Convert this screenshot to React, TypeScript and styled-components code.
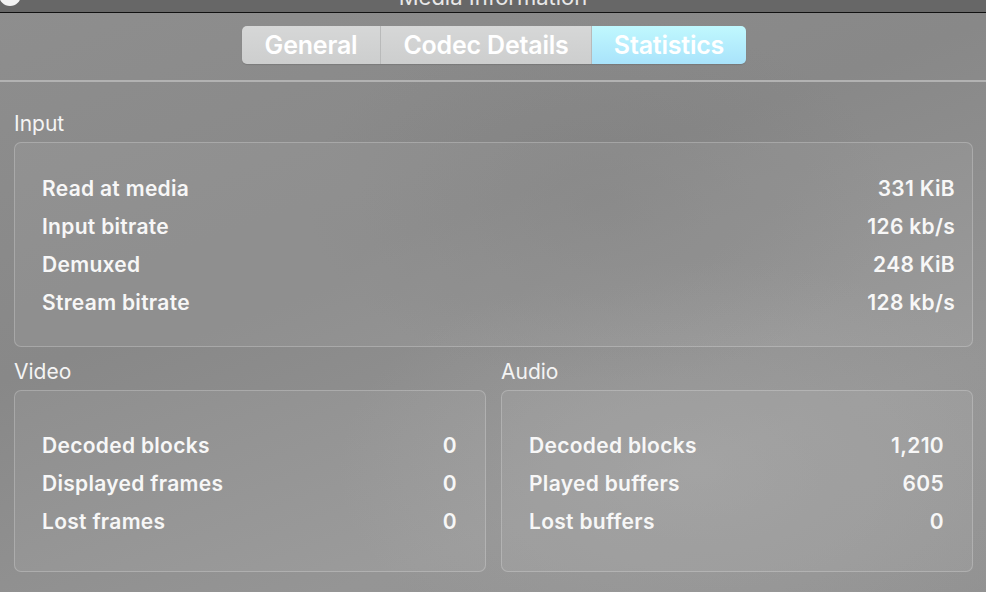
import React from "react"
import styled, { createGlobalStyle } from "styled-components"

const GlobalStyle = createGlobalStyle`
    html, body {
        margin: 0;
        padding: 0;
        background: #8a8a8a;
    }
    body {
        font-family: Inter, "Noto Sans", "Liberation Sans", sans-serif;
        -webkit-font-smoothing: antialiased;
    }
`

const Window = styled.div`
    width: 986px;
    height: 592px;
    overflow: hidden;
    display: flex;
    flex-direction: column;
    background:
        radial-gradient(ellipse 420px 260px at 600px 200px, rgba(120, 120, 120, 0.35), rgba(120, 120, 120, 0) 70%),
        radial-gradient(ellipse 520px 300px at 700px 470px, rgba(175, 175, 175, 0.35), rgba(175, 175, 175, 0) 70%),
        linear-gradient(160deg, #8e8e8e 0%, #888888 40%, #959595 75%, #929292 100%);
`

const TitleBar = styled.div`
    position: relative;
    height: 12px;
    flex: none;
    background: #676767;
    border-bottom: 1px solid #111111;
    overflow: hidden;
    display: flex;
    justify-content: center;
`

const TitleText = styled.div`
    margin-top: -14px;
    font-size: 22px;
    line-height: 22px;
    color: #e8e8e8;
`

const CloseButton = styled.div`
    position: absolute;
    left: -1px;
    top: -16px;
    width: 22px;
    height: 22px;
    border-radius: 50%;
    background: #f2f2f2;
`

const TabBar = styled.div`
    flex: none;
    display: flex;
    justify-content: center;
    padding-top: 13px;
    padding-left: 2px;
    box-sizing: border-box;
    border-bottom: 2px solid #b2b2b2;
    height: 69px;
`

const Segments = styled.div`
    display: flex;
    height: 38px;
    border-radius: 5px;
    overflow: hidden;
    box-shadow: 0 1px 1px rgba(0, 0, 0, 0.12);
`

const Segment = styled.div<{ $active?: boolean; $width: number }>`
    width: ${p => p.$width}px;
    display: flex;
    align-items: center;
    justify-content: center;
    font-size: 25px;
    font-weight: 600;
    letter-spacing: -0.2px;
    color: #ffffff;
    background: ${p => p.$active
        ? "linear-gradient(180deg, #c0f8fe 0%, #a9e3fb 100%)"
        : "linear-gradient(180deg, #d6d7d7 0%, #cdcece 100%)"};
    & + & {
        border-left: 1px solid #b9baba;
    }
`

const Content = styled.div`
    padding: 30px 13px 0 14px;
    display: flex;
    flex-direction: column;
`

const SectionLabel = styled.div`
    font-size: 21px;
    line-height: 24px;
    color: #f4f4f4;
    margin-bottom: 6px;
`

const Box = styled.div<{ $padTop: number; $padBottom: number; $padRight: number }>`
    border: 1px solid rgba(255, 255, 255, 0.22);
    border-radius: 7px;
    background: rgba(255, 255, 255, 0.06);
    padding: ${p => p.$padTop}px ${p => p.$padRight}px ${p => p.$padBottom}px 27px;
    display: flex;
    flex-direction: column;
`

const Row = styled.div`
    height: 38px;
    display: flex;
    align-items: center;
    justify-content: space-between;
    font-size: 21px;
    font-weight: 600;
    letter-spacing: 0.3px;
    color: #f7f7f7;
`

const Columns = styled.div`
    margin-top: 13px;
    display: grid;
    grid-template-columns: 1fr 1fr;
    column-gap: 15px;
`

type Stat = [string, string]

const input: Stat[] = [
    ["Read at media", "331 KiB"],
    ["Input bitrate", "126 kb/s"],
    ["Demuxed", "248 KiB"],
    ["Stream bitrate", "128 kb/s"],
]

const video: Stat[] = [
    ["Decoded blocks", "0"],
    ["Displayed frames", "0"],
    ["Lost frames", "0"],
]

const audio: Stat[] = [
    ["Decoded blocks", "1,210"],
    ["Played buffers", "605"],
    ["Lost buffers", "0"],
]

const StatBox = (props: { stats: Stat[]; padTop: number; padBottom: number; padRight: number }) => (
    <Box $padTop={props.padTop} $padBottom={props.padBottom} $padRight={props.padRight}>
        {props.stats.map(([label, value]) => (
            <Row key={label}>
                <span>{label}</span>
                <span>{value}</span>
            </Row>
        ))}
    </Box>
)

export default function App() {
    return (
        <>
            <GlobalStyle />
            <Window>
                <TitleBar>
                    <CloseButton />
                    <TitleText>Media Information</TitleText>
                </TitleBar>
                <TabBar>
                    <Segments>
                        <Segment $width={138}>General</Segment>
                        <Segment $width={210}>Codec Details</Segment>
                        <Segment $width={154} $active>Statistics</Segment>
                    </Segments>
                </TabBar>
                <Content>
                    <SectionLabel>Input</SectionLabel>
                    <StatBox stats={input} padTop={26} padBottom={25} padRight={17} />
                    <Columns>
                        <div>
                            <SectionLabel>Video</SectionLabel>
                            <StatBox stats={video} padTop={35} padBottom={31} padRight={28} />
                        </div>
                        <div>
                            <SectionLabel>Audio</SectionLabel>
                            <StatBox stats={audio} padTop={35} padBottom={31} padRight={28} />
                        </div>
                    </Columns>
                </Content>
            </Window>
        </>
    )
}
